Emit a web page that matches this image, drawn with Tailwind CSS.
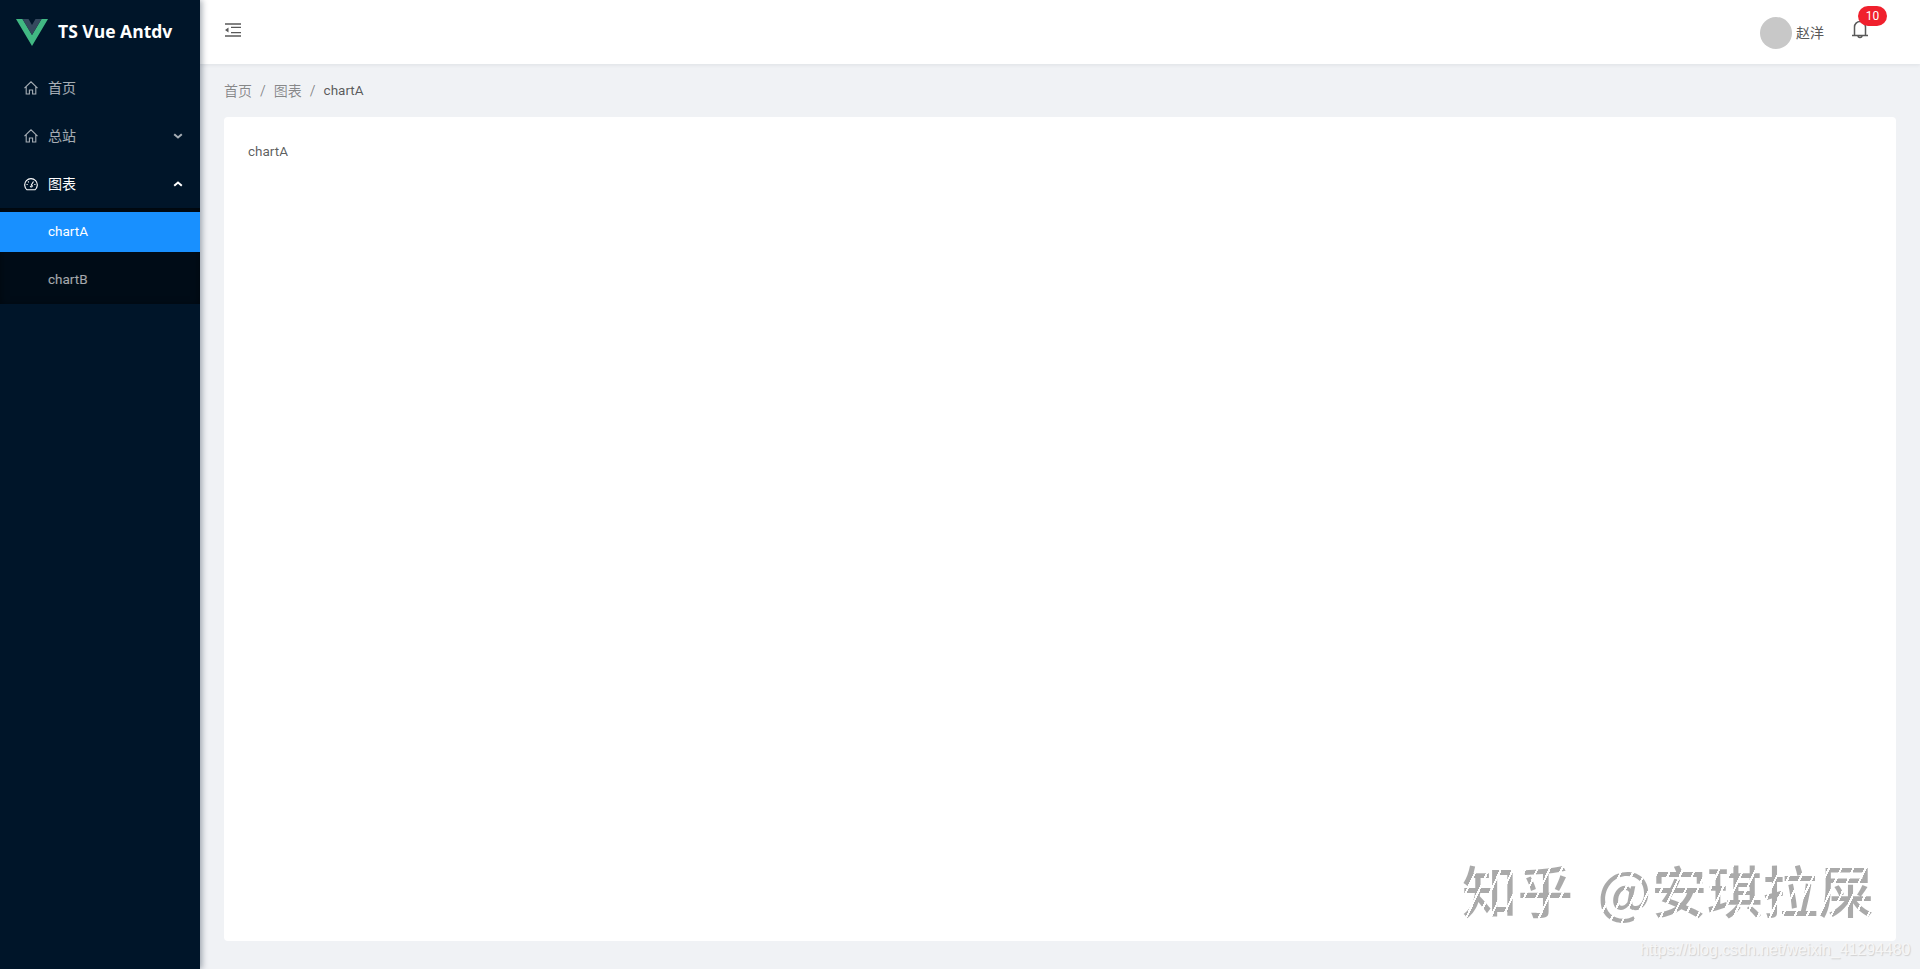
<!DOCTYPE html>
<html lang="zh-CN">
<head>
  <meta charset="UTF-8">
  <title>TS Vue Antdv</title>
  <script src="https://cdn.jsdelivr.net/npm/@tailwindcss/browser@4"></script>
</head>
<body class="font-['Roboto','Noto_Sans_CJK_SC',sans-serif] text-sm bg-[#f0f2f5] overflow-hidden">
<div class="relative flex h-[969px] w-[1920px]">

  <!-- Sidebar -->
  <aside class="w-[200px] shrink-0 bg-[#001529] shadow-[2px_0_6px_rgba(0,21,41,0.35)] z-10">
    <div class="h-16 flex items-center pl-4">
      <svg class="w-8 h-7 shrink-0" viewBox="0 0 32 28">
        <path d="M0 1h6.500L16 17 25.500 1H32L16 28z" fill="#41b883"/>
        <path d="M6.500 1h6L16 7l3.500-6h6L16 17z" fill="#35495e"/>
      </svg>
      <span class="ml-[10px] -mt-[2px] text-[17.500px] font-bold text-white whitespace-nowrap font-['Open_Sans',sans-serif]">TS Vue Antdv</span>
    </div>

    <nav class="pt-1 text-white/65">
      <a class="h-10 mb-2 flex items-center pl-6 pr-[17px]">
        <svg class="w-[14px] h-[14px] mr-[10px]" viewBox="0 0 14 14" fill="none" stroke="currentColor" stroke-width="1.100"><path d="M.5 7.200 7 .8l6.500 6.400M2.200 5.800V13h3.200V9h3.200v4h3.200V5.800"/></svg>
        <span>首页</span>
      </a>
      <a class="h-10 mb-2 flex items-center pl-6 pr-[17px]">
        <svg class="w-[14px] h-[14px] mr-[10px]" viewBox="0 0 14 14" fill="none" stroke="currentColor" stroke-width="1.100"><path d="M.5 7.200 7 .8l6.500 6.400M2.200 5.800V13h3.200V9h3.200v4h3.200V5.800"/></svg>
        <span>总站</span>
        <svg class="w-[10px] h-[10px] ml-auto" viewBox="0 0 10 10" fill="none" stroke="currentColor" stroke-width="2"><path d="m1.200 3.200 3.800 3.300 3.800-3.300"/></svg>
      </a>
      <a class="h-10 flex items-center pl-6 pr-[17px] text-white">
        <svg class="w-[14px] h-[14px] mr-[10px]" viewBox="0 0 14 14" fill="none" stroke="currentColor" stroke-width="1.100"><path d="M3 12.800A6.300 6.300 0 1 1 11 12.800zM7 8.500 9.500 4.500M7.500 8a1 1 0 1 1-1.200 1.200M2.500 7.500h1.200M10.300 7.500h1.200M4 4.500l.8.800"/></svg>
        <span>图表</span>
        <svg class="w-[10px] h-[10px] ml-auto" viewBox="0 0 10 10" fill="none" stroke="currentColor" stroke-width="2"><path d="m1.200 6.800 3.800-3.300 3.800 3.300"/></svg>
      </a>
      <div class="mt-1 bg-[#000c17] shadow-[inset_0_2px_8px_rgba(0,0,0,0.45)] py-1">
        <a class="h-10 mb-2 flex items-center pl-12 bg-[#1890ff] text-white text-[13.500px]">chartA</a>
        <a class="h-10 flex items-center pl-12 text-[13.500px]">chartB</a>
      </div>
    </nav>
  </aside>

  <!-- Main -->
  <div class="flex-1 min-w-0 flex flex-col">
    <header class="h-16 shrink-0 bg-white shadow-[0_1px_4px_rgba(0,21,41,0.08)] flex items-center pl-6 pr-[50px]">
      <svg class="w-4 h-4 ml-px -mt-1 text-[#595959]" viewBox="0 0 16 16" fill="currentColor"><path d="M0 1.300h16v1.400H0zM6 4.800h10v1.300H6zM6 9.900h10v1.300H6zM0 13.300h16v1.400H0zM0 8l3.500-2.600v5.200z"/></svg>
      <div class="ml-auto mt-[2px] flex items-center text-[#595959]">
        <div class="w-8 h-8 rounded-full bg-[#c8c8c8]"></div>
        <span class="ml-1">赵洋</span>
      </div>
      <div class="relative ml-[26px] w-5 h-5 -mt-[6px]">
        <svg class="w-5 h-5 text-[#595959]" viewBox="0 0 20 20" fill="none" stroke="currentColor" stroke-width="1.500"><path d="M2 16.500h16M4.500 16.500V8a5.500 5.500 0 0 1 11 0v8.500M8 16.500a2 2 0 0 0 4 0"/></svg>
        <span class="absolute -top-[13px] left-[8px] h-5 w-[29px] rounded-[10px] bg-[#f0202d] text-white text-xs leading-5 text-center">10</span>
      </div>
    </header>

    <main class="flex-1 min-h-0 flex flex-col px-6 pb-7">
      <div class="h-[53px] shrink-0 flex items-center gap-2 text-black/45">
        <span>首页</span><span>/</span><span>图表</span><span>/</span><span class="text-black/65 text-[13.500px]">chartA</span>
      </div>
      <section class="flex-1 bg-white rounded px-6 pt-[25px] text-black/65 text-[13.500px]">chartA</section>
    </main>
  </div>

  <!-- Image watermarks baked into the screenshot -->
  <div class="absolute left-[1462px] top-[851px] z-20 whitespace-nowrap text-[55.500px] leading-[76px] [word-spacing:12px] font-medium font-['Noto_Sans_CJK_SC',sans-serif] text-transparent bg-clip-text bg-[repeating-linear-gradient(115deg,#aaa_0_9px,#fff_9px_11px)]">知乎 @安琪拉屎</div>
  <div class="absolute left-[1640px] top-[940px] z-20 whitespace-nowrap text-[15.900px] leading-5 font-['Liberation_Sans',sans-serif] text-[#f6f6f6] [text-shadow:1px_1px_1px_#d0d0d0]">https://blog.csdn.net/weixin_41294480</div>
</div>
</body>
</html>
